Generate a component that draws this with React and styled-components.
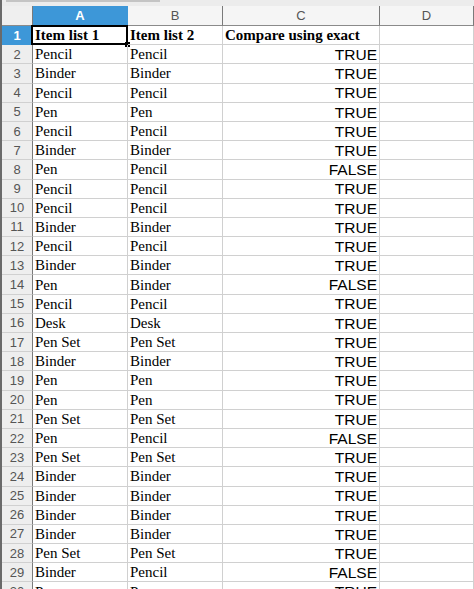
import React from "react";
import styled, { createGlobalStyle } from "styled-components";

const GlobalStyle = createGlobalStyle`
	html, body {
		margin: 0;
		padding: 0;
		background: #ffffff;
		overflow: hidden;
	}
`;

const ROW_H = 19.19;

const rows = [
	[ "Pencil", "Pencil", true ],
	[ "Binder", "Binder", true ],
	[ "Pencil", "Pencil", true ],
	[ "Pen", "Pen", true ],
	[ "Pencil", "Pencil", true ],
	[ "Binder", "Binder", true ],
	[ "Pen", "Pencil", false ],
	[ "Pencil", "Pencil", true ],
	[ "Pencil", "Pencil", true ],
	[ "Binder", "Binder", true ],
	[ "Pencil", "Pencil", true ],
	[ "Binder", "Binder", true ],
	[ "Pen", "Binder", false ],
	[ "Pencil", "Pencil", true ],
	[ "Desk", "Desk", true ],
	[ "Pen Set", "Pen Set", true ],
	[ "Binder", "Binder", true ],
	[ "Pen", "Pen", true ],
	[ "Pen", "Pen", true ],
	[ "Pen Set", "Pen Set", true ],
	[ "Pen", "Pencil", false ],
	[ "Pen Set", "Pen Set", true ],
	[ "Binder", "Binder", true ],
	[ "Binder", "Binder", true ],
	[ "Binder", "Binder", true ],
	[ "Binder", "Binder", true ],
	[ "Pen Set", "Pen Set", true ],
	[ "Binder", "Pencil", false ],
	[ "Pen", "Pen", true ],
];

const Window = styled.div`
	width: 474px;
	height: 589px;
	overflow: hidden;
	display: flex;
	flex-direction: column;
	background: #ffffff;
	border-left: 2px solid #6a6a6a;
	box-sizing: border-box;
`;

const TopStrip = styled.div`
	height: 6px;
	flex: none;
	background: #ececec;
	display: flex;
	align-items: flex-start;
	padding-left: 4px;
`;

const Thumb = styled.div`
	width: 154px;
	height: 2px;
	background: #c4c4c4;
`;

const Grid = styled.div`
	display: grid;
	grid-template-columns: 31px 95px 95px 157px 1fr;
	grid-template-rows: 20px;
	grid-auto-rows: ${ ROW_H }px;
`;

const ColHead = styled.div`
	background: ${ p => p.$active ? "#3d97d8" : "#f5f5f5" };
	color: ${ p => p.$active ? "#ffffff" : "#555555" };
	border-right: 1px solid ${ p => p.$active ? "#3d97d8" : "#7a7a7a" };
	border-bottom: 1px solid #8a8a8a;
	font-family: "Liberation Sans", Arial, sans-serif;
	font-size: 13px;
	font-weight: ${ p => p.$active ? 700 : 400 };
	display: flex;
	align-items: center;
	justify-content: center;
	box-sizing: border-box;
`;

const Corner = styled.div`
	background: #efefef;
	border-right: 1px solid #7a7a7a;
	border-bottom: 1px solid #8a8a8a;
	box-sizing: border-box;
`;

const RowHead = styled.div`
	background: ${ p => p.$active ? "#3d97d8" : "#eeeeee" };
	color: ${ p => p.$active ? "#ffffff" : "#555555" };
	border-right: 1px solid #7a7a7a;
	border-bottom: 1px solid ${ p => p.$active ? "#3d97d8" : "#d0d0d0" };
	font-family: "Liberation Sans", Arial, sans-serif;
	font-size: 13px;
	font-weight: ${ p => p.$active ? 700 : 400 };
	display: flex;
	align-items: center;
	justify-content: center;
	box-sizing: border-box;
`;

const Cell = styled.div`
	position: relative;
	border-right: 1px solid #d0d0d0;
	border-bottom: 1px solid #d0d0d0;
	box-sizing: border-box;
	padding: 1px 2px 0;
	display: flex;
	align-items: center;
	justify-content: ${ p => p.$num ? "flex-end" : "flex-start" };
	font-family: ${ p => p.$num ? "\"Liberation Sans\", Arial, sans-serif" : "\"Liberation Serif\", \"Times New Roman\", serif" };
	font-size: ${ p => p.$num ? "15.5px" : "15px" };
	font-weight: ${ p => p.$bold ? 700 : 400 };
	color: #000000;
	white-space: nowrap;
	line-height: 1;
`;

const Cursor = styled.div`
	position: absolute;
	inset: -1px -1px -1px -2px;
	border: 2px solid #000000;
	pointer-events: none;

	&::after {
		content: "";
		position: absolute;
		right: -4px;
		bottom: -4px;
		width: 5px;
		height: 5px;
		background: #000000;
	}
`;

const App = () => (
	<>
		<GlobalStyle />
		<Window>
			<TopStrip>
				<Thumb />
			</TopStrip>
			<Grid>
				<Corner />
				<ColHead $active>A</ColHead>
				<ColHead>B</ColHead>
				<ColHead>C</ColHead>
				<ColHead>D</ColHead>

				<RowHead $active>1</RowHead>
				<Cell $bold>
					Item list 1
					<Cursor />
				</Cell>
				<Cell $bold>Item list 2</Cell>
				<Cell $bold>Compare using exact</Cell>
				<Cell />

				{ rows.map( ( [ a, b, same ], i ) => (
					<React.Fragment key={ i }>
						<RowHead>{ i + 2 }</RowHead>
						<Cell>{ a }</Cell>
						<Cell>{ b }</Cell>
						<Cell $num>{ same ? "TRUE" : "FALSE" }</Cell>
						<Cell />
					</React.Fragment>
				) ) }
			</Grid>
		</Window>
	</>
);

export default App;
